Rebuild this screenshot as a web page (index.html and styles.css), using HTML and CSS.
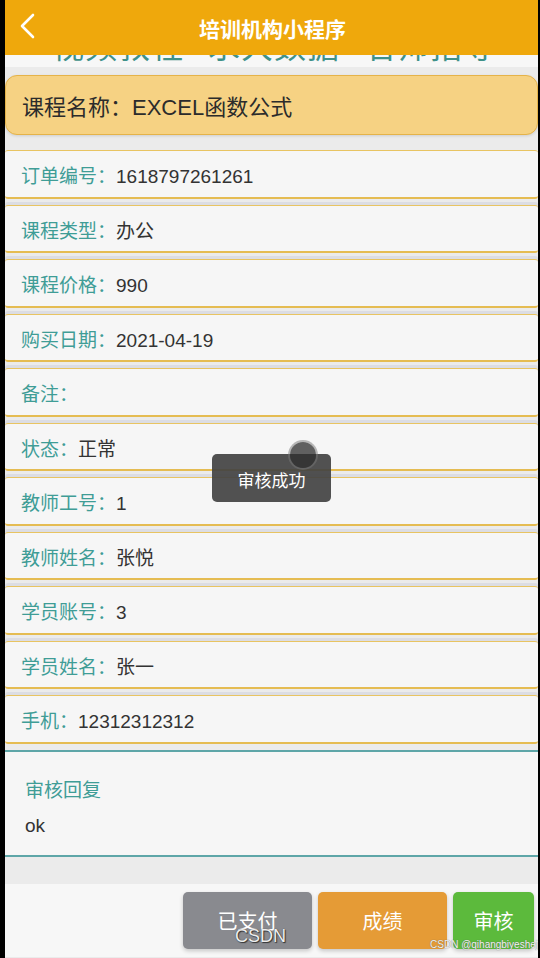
FILE: index.html
```html
<!DOCTYPE html>
<html lang="zh-CN">
<head>
    <meta charset="UTF-8">
    <meta name="viewport" content="width=device-width, initial-scale=1.0">
    <title>培训机构小程序</title>
    <link rel="stylesheet" href="styles.css">
</head>
<body>
    <div class="app">
        <div class="nav-bar">
            <svg class="nav-back" width="20" height="26" viewBox="0 0 20 26">
                <polyline points="15,2 4,13 15,24" fill="none" stroke="#fff" stroke-width="2.6" stroke-linecap="round" stroke-linejoin="round"/>
            </svg>
            <div class="nav-title">培训机构小程序</div>
        </div>

        <div class="banner-peek">
            <span>视频教程</span><span>求大数据</span><span>名师指导</span>
        </div>

        <div class="course-card">课程名称：EXCEL函数公式</div>

        <div class="field-list">
            <div class="field-row"><div><span class="field-label">订单编号：</span>1618797261261</div></div>
            <div class="field-row"><div><span class="field-label">课程类型：</span>办公</div></div>
            <div class="field-row"><div><span class="field-label">课程价格：</span>990</div></div>
            <div class="field-row"><div><span class="field-label">购买日期：</span>2021-04-19</div></div>
            <div class="field-row"><div><span class="field-label">备注：</span></div></div>
            <div class="field-row"><div><span class="field-label">状态：</span>正常</div></div>
            <div class="field-row"><div><span class="field-label">教师工号：</span>1</div></div>
            <div class="field-row"><div><span class="field-label">教师姓名：</span>张悦</div></div>
            <div class="field-row"><div><span class="field-label">学员账号：</span>3</div></div>
            <div class="field-row"><div><span class="field-label">学员姓名：</span>张一</div></div>
            <div class="field-row"><div><span class="field-label">手机：</span>12312312312</div></div>
        </div>

        <div class="review-card">
            <div class="review-title">审核回复</div>
            <div class="review-text">ok</div>
        </div>

        <div class="action-bar">
            <div class="action-btn btn-paid">已支付</div>
            <div class="action-btn btn-score">成绩</div>
            <div class="action-btn btn-audit">审核</div>
        </div>

        <!-- toast and overlays -->
        <div class="toast">审核成功</div>
        <div class="touch-dot"></div>
        <div class="mark-center">CSDN</div>
        <div class="mark-corner">CSDN @qihangbiyeshej</div>
    </div>
</body>
</html>
```

FILE: styles.css
```css
body {
    margin: 0;
    background: #000;
    font-family: 'Liberation Sans', 'Noto Sans CJK SC', sans-serif;
}
.app {
    position: relative;
    margin-left: 5px;
    width: 533px;
    height: 958px;
    overflow: hidden;
    background: #ebebeb;
}
.nav-bar {
    height: 55px;
    background: #efa80c;
    display: flex;
    align-items: center;
    justify-content: center;
    position: relative;
}
.nav-back {
    position: absolute;
    left: 13px;
    top: 13px;
}
.nav-title {
    color: #fff;
    font-size: 21px;
    font-weight: bold;
    margin-left: 2px;
}
.banner-peek {
    height: 12px;
    overflow: hidden;
    background: #f7f7f7;
    padding-left: 47px;
    display: flex;
    gap: 24px;
    color: #3f9189;
    font-size: 32px;
    line-height: 32px;
}
.banner-peek span {
    margin-top: -24px;
    letter-spacing: 1px;
}
.course-card {
    margin-top: 8px;
    height: 60px;
    box-sizing: border-box;
    background: #f6d283;
    border: 1px solid #e5b349;
    border-radius: 12px;
    box-shadow: 0 1px 3px rgba(0,0,0,0.12);
    display: flex;
    align-items: center;
    padding-left: 16px;
    font-size: 22px;
    color: #2b2b2b;
}
.field-list {
    margin-top: 15px;
}
.field-row {
    height: 48.5px;
    box-sizing: border-box;
    margin-bottom: 6px;
    background: #f6f6f6;
    border-top: 1px solid #e8c462;
    border-bottom: 2px solid #e5bc52;
    border-radius: 3px;
    display: flex;
    align-items: center;
    padding: 2px 0 0 16px;
    font-size: 19px;
    color: #333;
}
.field-list .field-row:nth-child(n+2) {
    box-shadow: 0 -3px 0 #dcdde3;
}
.field-label {
    color: #3f9d96;
}
.review-card {
    height: 107px;
    box-sizing: border-box;
    margin-top: 1.5px;
    background: #f6f6f6;
    border-top: 2px solid #5ea6a8;
    border-bottom: 2px solid #5ea6a8;
    padding: 23px 20px 0;
}
.review-title {
    color: #3f9d96;
    font-size: 19px;
}
.review-text {
    margin-top: 13px;
    font-size: 19px;
    color: #333;
}
.action-bar {
    margin-top: 27px;
    height: 73px;
    background: #f7f7f7;
    display: flex;
    justify-content: flex-end;
    gap: 6px;
    padding: 8px 4px 0 0;
    box-sizing: border-box;
}
.action-btn {
    height: 57px;
    border-radius: 5px;
    display: flex;
    align-items: center;
    justify-content: center;
    color: #fff;
    font-size: 20px;
    box-shadow: 0 2px 4px rgba(0,0,0,0.2);
}
.btn-paid {
    width: 129px;
    background: #898a8f;
}
.btn-score {
    width: 129px;
    background: #e59b36;
}
.btn-audit {
    width: 81px;
    background: #5cba3c;
}
.toast {
    position: absolute;
    left: 207px;
    top: 454px;
    width: 119px;
    height: 48px;
    border-radius: 5px;
    background: rgba(66,66,66,0.92);
    color: #fff;
    font-size: 17px;
    display: flex;
    align-items: center;
    justify-content: center;
    padding-top: 3px;
    box-sizing: border-box;
}
.touch-dot {
    position: absolute;
    left: 285px;
    top: 442px;
    width: 26px;
    height: 26px;
    border-radius: 50%;
    background: rgba(45,45,45,0.75);
    box-shadow: 0 0 0 2px rgba(120,120,120,0.5);
}
.mark-center {
    position: absolute;
    left: 230px;
    top: 926px;
    color: #eee;
    font-size: 18px;
    text-shadow: 0 0 1px #333, 1px 1px 1px #333;
}
.mark-corner {
    position: absolute;
    right: 0;
    top: 939px;
    color: #f2f2f2;
    font-size: 10px;
    text-shadow: 0 0 1px #555;
}
```
